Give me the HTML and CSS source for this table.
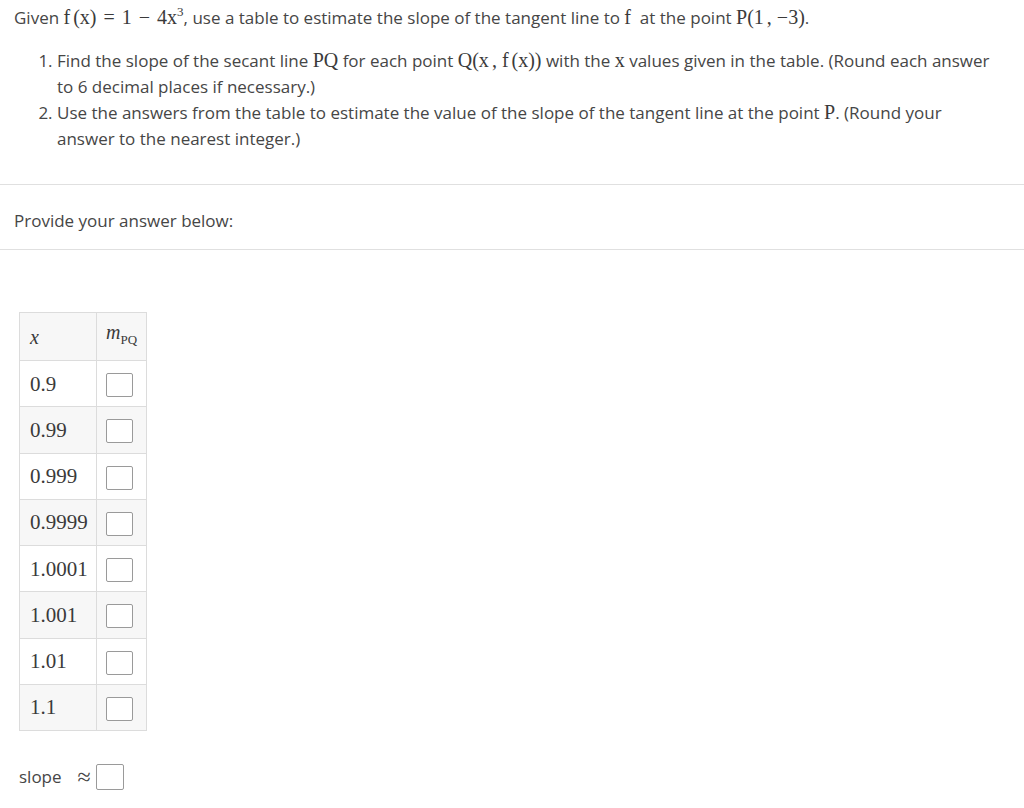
FILE: index.html
```html
<!DOCTYPE html>
<html>
<head>
<meta charset="utf-8">
<link rel="stylesheet" href="styles.css">
</head>
<body>
<div class="question">
  <p class="intro">Given <span class="m">f<span class="sp"></span>(x) <span class="op">=</span> 1 <span class="op">−</span> 4x<sup>3</sup></span>, use a table to estimate the slope of the tangent line to <span class="m">f</span>&nbsp; at the point <span class="m">P(1<span class="sp"></span>, −3)</span>.</p>
  <ol class="steps">
    <li>Find the slope of the secant line <span class="m">PQ</span> for each point <span class="m">Q(x<span class="sp"></span>, f<span class="sp"></span>(x))</span> with the <span class="m">x</span> values given in the table. (Round each answer to 6 decimal places if necessary.)</li>
    <li>Use the answers from the table to estimate the value of the slope of the tangent line at the point <span class="m">P</span>. (Round your answer to the nearest integer.)</li>
  </ol>
</div>
<div class="prompt">Provide your answer below:</div>
<div class="answer">
  <table class="grid">
    <thead>
      <tr><th class="xcol"><i>x</i></th><th class="mcol"><i>m</i><sub>PQ</sub></th></tr>
    </thead>
    <tbody>
      <tr><td class="xcol">0.9</td><td class="mcol"><span class="box"></span></td></tr>
      <tr><td class="xcol">0.99</td><td class="mcol"><span class="box"></span></td></tr>
      <tr><td class="xcol">0.999</td><td class="mcol"><span class="box"></span></td></tr>
      <tr><td class="xcol">0.9999</td><td class="mcol"><span class="box"></span></td></tr>
      <tr><td class="xcol">1.0001</td><td class="mcol"><span class="box"></span></td></tr>
      <tr><td class="xcol">1.001</td><td class="mcol"><span class="box"></span></td></tr>
      <tr><td class="xcol">1.01</td><td class="mcol"><span class="box"></span></td></tr>
      <tr><td class="xcol">1.1</td><td class="mcol"><span class="box"></span></td></tr>
    </tbody>
  </table>
  <div class="slope"><span>slope</span><span class="approx">≈</span><span class="box"></span></div>
</div>
</body>
</html>
```
FILE: styles.css
```css
html, body {
  margin: 0;
  padding: 0;
  background: #fff;
}
body {
  font-family: "Open Sans", "Liberation Sans", sans-serif;
  font-size: 17px;
  line-height: 26px;
  color: #464646;
}
.question {
  padding: 5px 30px 32px 14px;
  border-bottom: 1px solid #e0e0e0;
}
.intro {
  margin: 0;
}
.m {
  font-family: "Liberation Serif", "DejaVu Serif", serif;
  font-size: 20px;
  line-height: 1;
  color: #3a3a3a;
}
.op {
  margin: 0 2px;
}
.m sup {
  font-size: 13px;
  line-height: 0;
  vertical-align: 8px;
}
.sp {
  display: inline-block;
  width: 3px;
}
.steps {
  margin: 17px 0 0 0;
  padding-left: 43px;
}
.prompt {
  padding: 23px 14px 15px 14px;
  border-bottom: 1px solid #e0e0e0;
}
.answer {
  padding: 62px 19px 0 19px;
}
.grid {
  border-collapse: collapse;
  font-family: "Liberation Serif", "DejaVu Serif", serif;
  font-size: 21px;
  color: #3a3a3a;
}
.grid th, .grid td {
  border: 1px solid #dcdcdc;
  padding: 0;
  text-align: left;
  font-weight: normal;
}
.grid thead tr {
  height: 48px;
  background: #f7f7f7;
}
.grid tbody tr {
  height: 46.25px;
}
.grid tbody tr:nth-child(even) {
  background: #f7f7f7;
}
.xcol {
  width: 66px;
  padding-left: 10px !important;
}
.mcol {
  width: 40px;
  padding-left: 9px !important;
}
.grid th i {
  font-size: 20px;
}
.grid th sub {
  font-style: normal;
  font-size: 13px;
}
.box {
  display: inline-block;
  width: 25px;
  height: 22px;
  border: 1px solid #9a9a9a;
  border-radius: 2px;
  background: #fff;
  vertical-align: middle;
}
.slope {
  display: flex;
  align-items: center;
  margin-top: 33px;
}
.approx {
  font-family: "Liberation Serif", "DejaVu Serif", serif;
  font-size: 24px;
  line-height: 1;
  margin: 0 5px 0 16px;
}
.slope .box {
  width: 26px;
  height: 24px;
}
```
